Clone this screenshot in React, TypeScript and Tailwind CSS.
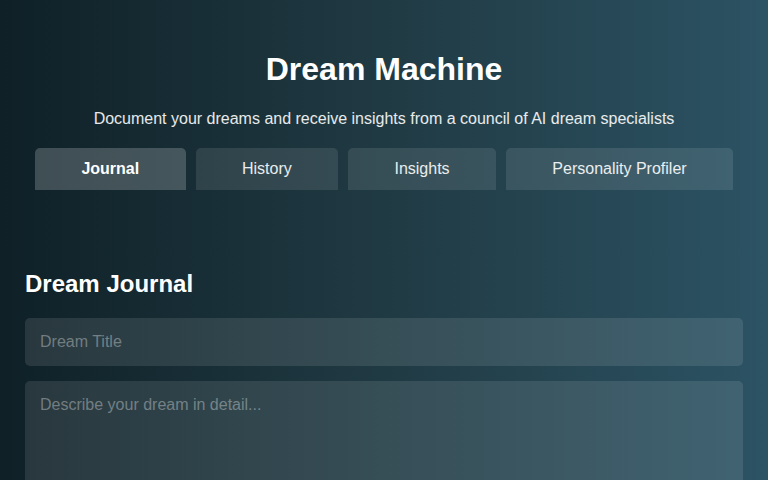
import React, { useState } from "react";

const tabs = ["Journal", "History", "Insights", "Personality Profiler"];

export default function App() {
  const [active, setActive] = useState("Journal");
  return (
    <div
      className="min-h-screen w-full bg-[linear-gradient(to_right,#0f2027,#203a43,#2c5364)] text-white"
      style={{ fontFamily: '"Liberation Sans", Arial, sans-serif' }}
    >
      <div className="px-[25px] pt-[51px]">
        <header className="text-center">
          <h1 className="text-[32px] leading-[37px] font-bold">Dream Machine</h1>
          <p className="mt-[22px] text-[16px] leading-[18px] text-white/90">
            Document your dreams and receive insights from a council of AI dream specialists
          </p>
        </header>

        <nav className="mt-[20px] flex gap-[10px] px-[10px]">
          {tabs.map((t) => (
            <button
              key={t}
              onClick={() => setActive(t)}
              className={
                t === active
                  ? "flex-auto rounded-t-[5px] bg-white/20 py-3 text-[16px] leading-[18px] font-bold text-white"
                  : "flex-auto rounded-t-[5px] bg-white/10 py-3 text-[16px] leading-[18px] text-white/90"
              }
            >
              {t}
            </button>
          ))}
        </nav>

        <section className="mt-[80px]">
          <h2 className="text-[24px] leading-[28px] font-bold">Dream Journal</h2>
          <input
            type="text"
            placeholder="Dream Title"
            className="mt-[20px] block h-[48px] w-full rounded-[5px] bg-white/10 px-[15px] text-[16px] text-white outline-none placeholder:text-white/35"
          />
          <textarea
            placeholder="Describe your dream in detail..."
            className="mt-[15px] block h-[160px] w-full resize-none rounded-[5px] bg-white/10 px-[15px] py-[15px] text-[16px] leading-[18px] text-white outline-none placeholder:text-white/35"
          />
        </section>
      </div>
    </div>
  );
}
